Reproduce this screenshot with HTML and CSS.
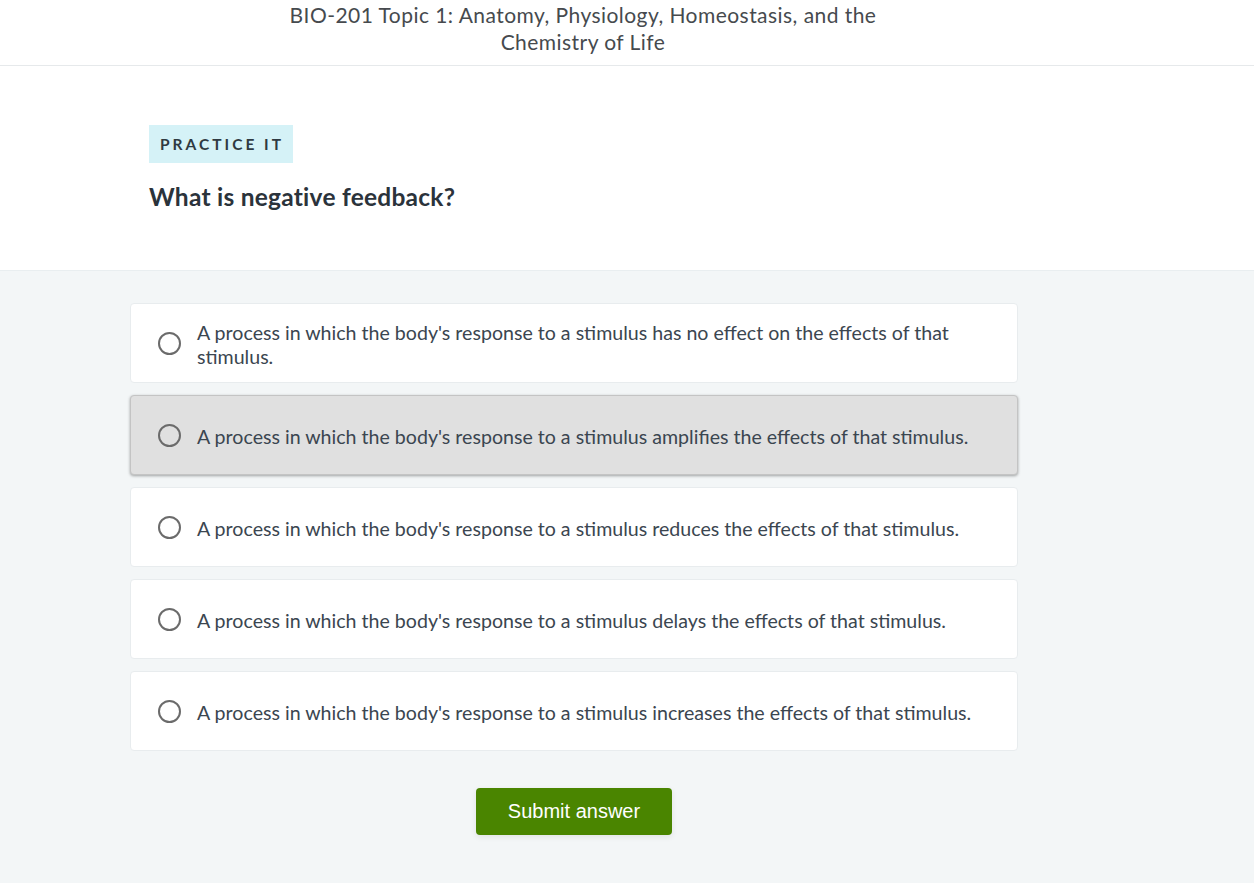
FILE: index.html
```html
<!DOCTYPE html>
<html lang="en">
<head>
<meta charset="utf-8">
<title>Practice It</title>
<link rel="stylesheet" href="styles.css">
</head>
<body>
<header class="topbar">
  <h1 class="course-title">BIO-201 Topic 1: Anatomy, Physiology, Homeostasis, and the Chemistry of Life</h1>
</header>
<section class="prompt">
  <div class="prompt-inner">
    <span class="badge">PRACTICE IT</span>
    <h2 class="question">What is negative feedback?</h2>
  </div>
</section>
<main class="answers">
  <ul class="options">
    <li class="option"><span class="radio"></span><span class="option-text">A process in which the body's response to a stimulus has no effect on the effects of that stimulus.</span></li>
    <li class="option option-hover"><span class="radio"></span><span class="option-text">A process in which the body's response to a stimulus amplifies the effects of that stimulus.</span></li>
    <li class="option"><span class="radio"></span><span class="option-text">A process in which the body's response to a stimulus reduces the effects of that stimulus.</span></li>
    <li class="option"><span class="radio"></span><span class="option-text">A process in which the body's response to a stimulus delays the effects of that stimulus.</span></li>
    <li class="option"><span class="radio"></span><span class="option-text">A process in which the body's response to a stimulus increases the effects of that stimulus.</span></li>
  </ul>
  <div class="actions">
    <button class="submit" type="button">Submit answer</button>
  </div>
</main>
</body>
</html>
```
FILE: styles.css
```css
* { box-sizing: border-box; }
html, body { margin: 0; padding: 0; }
body {
  font-family: Lato, "Open Sans", sans-serif;
  background: #f3f6f7;
  color: #3b4650;
  min-height: 883px;
}
.topbar {
  background: #fff;
  border-bottom: 1px solid #e6e9eb;
  display: flex;
  justify-content: center;
  padding: 1px 88px 10px 0;
}
.course-title {
  margin: 0;
  max-width: 610px;
  text-align: center;
  font-weight: 400;
  font-size: 21px;
  letter-spacing: 0.45px;
  line-height: 27px;
  color: #464a4e;
}
.prompt {
  background: #fff;
  border-bottom: 1px solid #e9eef0;
  padding: 59px 0 58px;
}
.prompt-inner {
  width: 888px;
  margin-left: 130px;
  padding-left: 19px;
}
.badge {
  display: inline-block;
  background: #d5f2f7;
  color: #2f3a42;
  font-weight: 700;
  font-size: 15.5px;
  letter-spacing: 3px;
  line-height: 38px;
  padding: 0 9px 0 11px;
}
.question {
  margin: 19px 0 0;
  font-size: 24.5px;
  letter-spacing: 0.25px;
  line-height: 30px;
  font-weight: 700;
  color: #2b333b;
}
.answers {
  width: 888px;
  margin-left: 130px;
  padding: 32px 0 48px;
}
.options {
  list-style: none;
  margin: 0;
  padding: 0;
  display: flex;
  flex-direction: column;
  gap: 12px;
}
.option {
  display: flex;
  align-items: center;
  gap: 16px;
  height: 80px;
  padding: 0 27px;
  background: #fff;
  border: 1px solid #e8ecee;
  border-radius: 4px;
  font-size: 19.6px;
  line-height: 24px;
  color: #3b4650;
}
.option-hover {
  background: #e0e0e0;
  border-color: #c4c4c4;
  box-shadow: 0 1px 3px rgba(0,0,0,0.35);
}
.radio {
  flex: none;
  width: 23px;
  height: 23px;
  border: 2.5px solid #6b6b6b;
  border-radius: 50%;
  background: transparent;
}
.option-text { padding-top: 3px; }
.actions {
  display: flex;
  justify-content: center;
  margin-top: 37px;
}
.submit {
  width: 196px;
  height: 47px;
  border: none;
  border-radius: 4px;
  background: #4a8500;
  color: #fff;
  font-family: "Liberation Sans", Arial, sans-serif;
  font-size: 20px;
  box-shadow: 0 2px 6px rgba(0,0,0,0.08);
  cursor: pointer;
}
```
